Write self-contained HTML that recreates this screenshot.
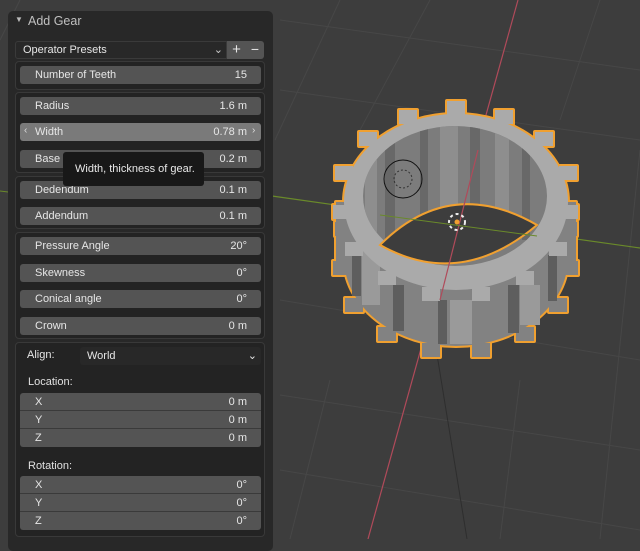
<!DOCTYPE html><html><head><meta charset="utf-8"><style>
*{margin:0;padding:0;box-sizing:border-box}
body{width:640px;height:539px;overflow:hidden;background:#3d3d3d;font-family:"Liberation Sans",sans-serif;font-size:11px;color:#e6e6e6;position:relative}
.a{position:absolute}
.panel{left:8px;top:11px;width:265px;height:540px;background:#282828;border-radius:5px}
.box{position:absolute;left:15px;width:250px;border:1px solid #393939;border-radius:4px;background:#232323}
.f{position:absolute;left:20px;width:241px;height:18px;background:#545454;border-radius:3px;line-height:18px;padding:0 14px 0 15px}
.f span{float:right}
.t{position:absolute;left:20px;width:241px;height:18px;background:#545454;line-height:18px;padding:0 14px 0 15px;border-bottom:1px solid #3a3a3a}
.t span{float:right}
.lbl{position:absolute;left:28px;color:#e0e0e0}
</style></head><body>
<svg class="a" style="left:0;top:0" width="640" height="539">
<defs>
<g id="gs">
<ellipse cx="456" cy="202" rx="112" ry="88"/>
<rect x="447" y="101" width="18" height="14"/><rect x="495" y="110" width="18" height="14"/><rect x="535" y="132" width="18" height="14"/><rect x="559" y="166" width="18" height="14"/><rect x="562" y="205" width="16" height="14"/><rect x="549" y="242" width="18" height="14"/><rect x="516" y="271" width="18" height="14"/><rect x="472" y="287" width="18" height="14"/><rect x="422" y="287" width="18" height="14"/><rect x="378" y="271" width="18" height="14"/><rect x="345" y="242" width="18" height="14"/><rect x="333" y="205" width="16" height="14"/><rect x="335" y="166" width="18" height="14"/><rect x="359" y="132" width="18" height="14"/><rect x="399" y="110" width="18" height="14"/>
</g>
<clipPath id="inner"><ellipse cx="455" cy="196" rx="92" ry="70"/></clipPath>
</defs>
<g stroke="#474747" stroke-width="1" fill="none">
<line x1="0" y1="40" x2="20" y2="0"/>
<line x1="280" y1="90" x2="640" y2="140"/><line x1="280" y1="300" x2="640" y2="360"/>
<line x1="280" y1="395" x2="640" y2="450"/><line x1="280" y1="470" x2="640" y2="530"/>
<line x1="340" y1="0" x2="275" y2="140"/><line x1="430" y1="0" x2="360" y2="130"/>
<line x1="600" y1="0" x2="560" y2="120"/><line x1="640" y1="150" x2="600" y2="539"/>
<line x1="280" y1="20" x2="640" y2="70"/><line x1="520" y1="380" x2="500" y2="539"/>
<line x1="330" y1="380" x2="290" y2="539"/>
</g>
<line x1="272" y1="196" x2="640" y2="248" stroke="#6a8a2a" stroke-width="1.2"/>
<line x1="0" y1="191" x2="8" y2="192" stroke="#6a8a2a"/>
<line x1="518" y1="0" x2="368" y2="539" stroke="#b04a5a" stroke-width="1.2"/>
<line x1="420" y1="250" x2="467" y2="539" stroke="#2e2e2e" stroke-width="1"/>
<g fill="#f0a030" stroke="#f0a030" stroke-width="4" stroke-linejoin="round">
<use href="#gs"/><use href="#gs" y="56"/>
<rect x="336" y="202" width="240" height="60"/>
</g>
<g fill="#828282"><use href="#gs" y="56"/><rect x="336" y="202" width="240" height="60"/></g>
<g fill="#5e5e5e"><rect x="352" y="250" width="9" height="46"/><rect x="393" y="285" width="11" height="46"/><rect x="438" y="300" width="9" height="44"/><rect x="508" y="285" width="11" height="48"/><rect x="548" y="255" width="9" height="46"/></g>
<g fill="#9a9a9a"><rect x="362" y="250" width="18" height="55"/><rect x="450" y="300" width="22" height="44"/><rect x="520" y="285" width="20" height="40"/></g>
<g fill="#aaaaaa"><use href="#gs"/></g>
<ellipse cx="455" cy="196" rx="92" ry="70" fill="#7c7c7c"/>
<g clip-path="url(#inner)">
<g fill="#686868"><rect x="385" y="120" width="10" height="130"/><rect x="420" y="120" width="8" height="120"/><rect x="470" y="120" width="10" height="120"/><rect x="522" y="120" width="8" height="120"/></g>
<g fill="#8e8e8e"><rect x="440" y="120" width="18" height="100"/><rect x="495" y="120" width="14" height="110"/><rect x="365" y="120" width="12" height="130"/></g>
</g>
<path d="M380 245 Q450 175 537 225 Q460 290 380 245 Z" fill="#3d3d3d" stroke="#f0a030" stroke-width="2"/>
<line x1="478" y1="150" x2="440" y2="300" stroke="#b04a5a" stroke-width="1.2"/>
<line x1="380" y1="215" x2="537" y2="236" stroke="#6a8a2a" stroke-width="1"/>
<circle cx="457" cy="222" r="8" fill="none" stroke="#eee" stroke-width="2" stroke-dasharray="3 3"/>
<circle cx="457" cy="222" r="2.5" fill="#f0a030"/>
<circle cx="403" cy="179" r="19" fill="none" stroke="#111" stroke-width="1"/>
<circle cx="403" cy="179" r="9" fill="none" stroke="#333" stroke-dasharray="2 2"/>
</svg>
<div class="a panel"></div>
<div class="a" style="left:15px;top:15px;color:#bbb;font-size:8px">▼</div>
<div class="a" style="left:28px;top:14px;font-size:12.5px;color:#c0c0c0">Add Gear</div>
<div class="a" style="left:15px;top:41px;width:212px;height:18px;background:#282828;border:1px solid #3a3a3a;border-radius:3px 0 0 3px;line-height:16px;padding-left:7px">Operator Presets<span style="position:absolute;right:3px;color:#ccc">⌄</span></div>
<div class="a" style="left:227px;top:41px;width:19px;height:18px;background:#545454;text-align:center;line-height:17px;font-size:15px">+</div>
<div class="a" style="left:246px;top:41px;width:18px;height:18px;background:#545454;border-radius:0 3px 3px 0;text-align:center;line-height:17px;font-size:14px">−</div>
<div class="box" style="top:61px;height:29px"></div>
<div class="box" style="top:92px;height:81px"></div>
<div class="box" style="top:176px;height:53px"></div>
<div class="box" style="top:232px;height:107px"></div>
<div class="box" style="top:342px;height:195px"></div>
<div class="f" style="top:66px">Number of Teeth<span>15</span></div>
<div class="f" style="top:97px">Radius<span>1.6 m</span></div>
<div class="f" style="top:123px;background:#7a7a7a">Width<span>0.78 m</span></div>
<div class="a" style="left:24px;top:125px;font-size:10px;color:#ddd">‹</div>
<div class="a" style="left:252px;top:125px;font-size:10px;color:#ddd">›</div>
<div class="f" style="top:150px">Base<span>0.2 m</span></div>
<div class="f" style="top:181px">Dedendum<span>0.1 m</span></div>
<div class="f" style="top:207px">Addendum<span>0.1 m</span></div>
<div class="f" style="top:237px">Pressure Angle<span>20°</span></div>
<div class="f" style="top:264px">Skewness<span>0°</span></div>
<div class="f" style="top:290px">Conical angle<span>0°</span></div>
<div class="f" style="top:317px">Crown<span>0 m</span></div>
<div class="a" style="left:63px;top:152px;width:141px;height:34px;background:#181818;border-radius:3px;line-height:34px;padding-left:12px;color:#e8e8e8">Width, thickness of gear.</div>
<div class="a" style="left:27px;top:349px">Align:</div>
<div class="a" style="left:80px;top:347px;width:181px;height:18px;background:#282828;border-radius:3px;line-height:18px;padding-left:7px">World<span style="position:absolute;right:4px">⌄</span></div>
<div class="lbl" style="top:376px">Location:</div>
<div class="t" style="top:393px;border-radius:3px 3px 0 0">X<span>0 m</span></div>
<div class="t" style="top:411px">Y<span>0 m</span></div>
<div class="t" style="top:429px;border-radius:0 0 3px 3px;border:none">Z<span>0 m</span></div>
<div class="lbl" style="top:460px">Rotation:</div>
<div class="t" style="top:476px;border-radius:3px 3px 0 0">X<span>0°</span></div>
<div class="t" style="top:494px">Y<span>0°</span></div>
<div class="t" style="top:512px;border-radius:0 0 3px 3px;border:none">Z<span>0°</span></div>
</body></html>
